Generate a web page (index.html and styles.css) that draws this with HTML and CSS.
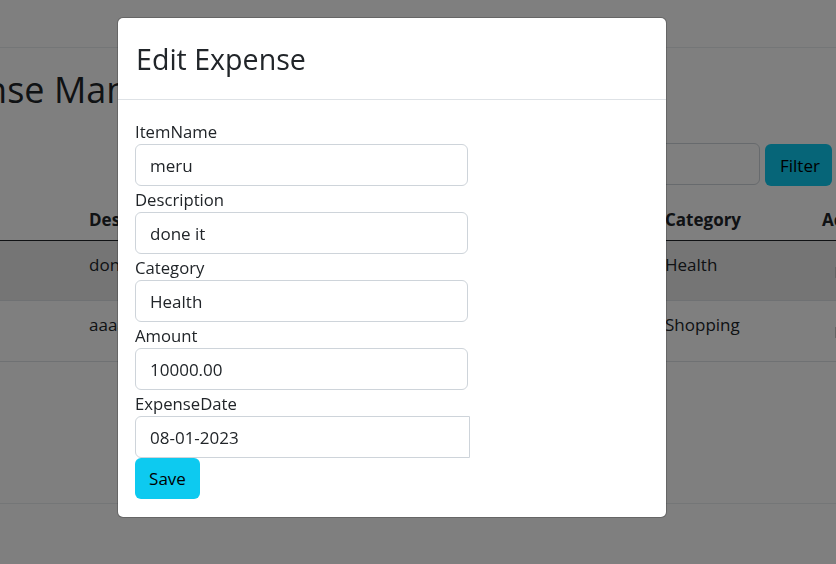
FILE: index.html
```html
<!DOCTYPE html>
<html lang="en">
<head>
  <meta charset="UTF-8">
  <meta name="viewport" content="width=device-width, initial-scale=1.0">
  <title>Expense Manager</title>
  <link rel="stylesheet" href="styles.css">
</head>
<body>
  <nav class="navbar"></nav>
  <div class="page">
    <h1 class="page-title">Expense Manager</h1>
    <div class="filter-row">
      <input class="filter-input" type="text">
      <button class="btn btn-filter">Filter</button>
    </div>
    <table class="expense-table">
      <thead>
        <tr>
          <th class="col-name">ItemName</th>
          <th class="col-desc">Description</th>
          <th class="col-amount">Amount</th>
          <th class="col-date">ExpenseDate</th>
          <th class="col-cat">Category</th>
          <th class="col-action">Action</th>
        </tr>
      </thead>
      <tbody>
        <tr class="row-hover">
          <td>meru</td>
          <td>done it</td>
          <td>10000.00</td>
          <td>08-01-2023</td>
          <td>Health</td>
          <td><span class="action-btn"></span></td>
        </tr>
        <tr>
          <td>abc</td>
          <td>aaaa</td>
          <td>500.00</td>
          <td>08-01-2023</td>
          <td>Shopping</td>
          <td><span class="action-btn"></span></td>
        </tr>
      </tbody>
    </table>
  </div>
  <footer class="footer"></footer>

  <div class="backdrop"></div>
  <div class="modal">
    <div class="modal-header">
      <h2 class="modal-title">Edit Expense</h2>
    </div>
    <form class="modal-body">
      <label class="field-label">ItemName</label>
      <input class="field-input" type="text" value="meru">
      <label class="field-label">Description</label>
      <input class="field-input" type="text" value="done it">
      <label class="field-label">Category</label>
      <input class="field-input" type="text" value="Health">
      <label class="field-label">Amount</label>
      <input class="field-input" type="text" value="10000.00">
      <label class="field-label">ExpenseDate</label>
      <input class="field-input field-date" type="text" value="08-01-2023">
      <button class="btn btn-save" type="button">Save</button>
    </form>
  </div>
</body>
</html>
```

FILE: styles.css
```css
* {
  box-sizing: border-box;
}

html, body {
  height: 100%;
  margin: 0;
  overflow: hidden;
}

body {
  background: #fff;
  color: #212529;
  font-family: 'Open Sans', sans-serif;
  font-size: 17px;
}

.navbar {
  height: 48px;
  border-bottom: 1px solid #e9ecef;
}

.page {
  width: 964px;
  margin-left: -128px;
}

.page-title {
  margin: 16px 0 0 0;
  padding-left: 32px;
  height: 79px;
  font-size: 36px;
  font-weight: 400;
  line-height: 52px;
}

.filter-row {
  display: flex;
  justify-content: flex-end;
  gap: 5px;
  padding-right: 4px;
}

.filter-input {
  width: 300px;
  height: 42px;
  border: 1px solid #ced4da;
  border-radius: 6px;
  background: #fff;
}

.btn {
  border: 0;
  border-radius: 6px;
  background: #0dcaf0;
  color: #000;
  font-family: inherit;
  font-size: 17px;
  height: 42px;
  padding: 0 15px;
}

.btn-filter {
  width: 67px;
  margin-top: 1px;
}

.expense-table {
  width: 964px;
  margin-top: 14px;
  border-collapse: collapse;
  table-layout: fixed;
}

.expense-table th {
  height: 40px;
  padding: 8px;
  text-align: left;
  font-weight: 700;
  border-bottom: 1px solid #212529;
}

.expense-table td {
  height: 60.5px;
  padding: 12px 8px 8px;
  vertical-align: top;
  border-bottom: 1px solid #dee2e6;
}

.row-hover td {
  background: #ebebeb;
}

.col-name {
  width: 209px;
}

.col-desc {
  width: 192px;
}

.col-amount,
.col-date {
  width: 192px;
}

.col-cat {
  width: 157px;
}

.action-btn {
  display: block;
  width: 40px;
  height: 11px;
  margin: 14px 0 0 13px;
  background: #c8c8c8;
}

.footer {
  height: 1px;
  margin-top: 141px;
  background: #e9ecef;
}

.backdrop {
  position: fixed;
  inset: 0;
  background: #000;
  opacity: 0.5;
}

.modal {
  position: fixed;
  left: 117px;
  top: 17px;
  width: 550px;
  height: 501px;
  background: #fff;
  background-clip: padding-box;
  border: 1px solid rgba(0, 0, 0, 0.2);
  border-radius: 6px;
}

.modal-header {
  height: 82px;
  padding: 0 18px;
  border-bottom: 1px solid #dee2e6;
  display: flex;
  align-items: center;
}

.modal-title {
  margin: 0;
  font-size: 28.6px;
  font-weight: 400;
}

.modal-body {
  display: flex;
  flex-direction: column;
  align-items: flex-start;
  padding: 20px 17px 0;
}

.field-label {
  height: 24px;
  font-size: 16.7px;
  line-height: 24px;
}

.field-input {
  width: 333px;
  height: 42px;
  margin-bottom: 2px;
  padding: 0 14px;
  border: 1px solid #ced4da;
  border-radius: 6px;
  color: #212529;
  font-family: inherit;
  font-size: 17px;
}

.field-date {
  width: 335px;
  margin-bottom: 0;
  border-radius: 6px 0 0 6px;
}

.btn-save {
  width: 65px;
  height: 41px;
  padding: 0;
}
```
